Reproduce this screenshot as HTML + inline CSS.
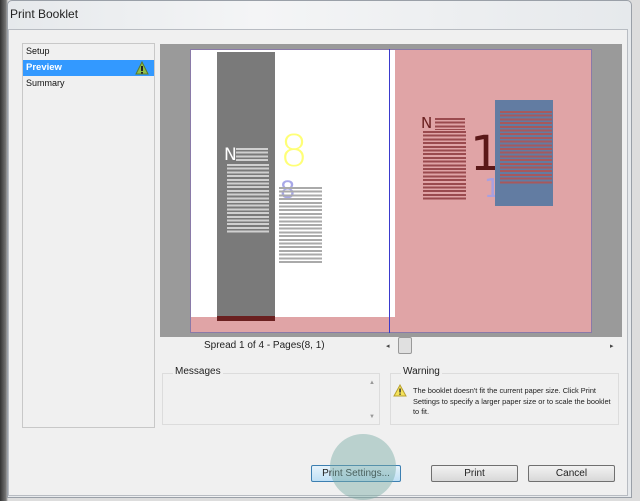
<!DOCTYPE html>
<html><head><style>
*{margin:0;padding:0;box-sizing:border-box}
body{width:640px;height:501px;overflow:hidden;background:#6a6a6a;font-family:"Liberation Sans",sans-serif;position:relative}
.a{position:absolute}
.lines{position:absolute}
</style></head><body>
<div class="a" style="left:0;top:0;width:640px;height:501px;background:linear-gradient(90deg,#333 0,#777 6px,#ddd 8px)"></div>
<div class="a" style="left:7px;top:0;width:625px;height:498px;background:linear-gradient(90deg,#e6e9ec,#f4f5f6 40%,#e6e9ec);border:1px solid #9aa0a8;border-radius:5px 5px 0 0"></div>
<div class="a" style="left:10px;top:7px;font-size:12px;color:#222">Print Booklet</div>
<div class="a" style="left:8px;top:29px;width:620px;height:467px;background:#f0f0f0;border:1px solid #b8bcc2"></div>
<!-- left list -->
<div class="a" style="left:22px;top:43px;width:133px;height:385px;background:#f0f0f0;border:1px solid #c8c8c8"></div>
<div class="a" style="left:26px;top:46px;font-size:9px;color:#111">Setup</div>
<div class="a" style="left:23px;top:60px;width:131px;height:16px;background:#3399ff"></div>
<div class="a" style="left:26px;top:62px;font-size:9.5px;color:#fff;font-weight:bold">Preview</div>
<svg class="a" style="left:135px;top:61px" width="14" height="14"><polygon points="7,1 13,13 1,13" fill="#8fbf4a" stroke="#5a7a2a"/><rect x="6" y="5" width="2" height="5" fill="#222"/><rect x="6" y="11" width="2" height="1.5" fill="#222"/></svg>
<div class="a" style="left:26px;top:78px;font-size:9px;color:#111">Summary</div>
<!-- preview -->
<div class="a" style="left:160px;top:44px;width:462px;height:293px;background:#9a9a9a"></div>
<div class="a" style="left:190px;top:49px;width:205px;height:268px;background:#fff"></div>
<div class="a" style="left:190px;top:317px;width:205px;height:16px;background:#e0a4a6"></div>
<div class="a" style="left:395px;top:49px;width:197px;height:284px;background:#e0a4a6"></div>
<div class="a" style="left:190px;top:49px;width:402px;height:284px;border:1px solid #8a7aa8"></div>
<div class="a" style="left:389px;top:49px;width:1px;height:284px;background:#3a3acc"></div>
<div class="a" style="left:217px;top:52px;width:58px;height:269px;background:#7a7a7a"></div>
<div class="a" style="left:217px;top:316px;width:58px;height:5px;background:#6a2020"></div>
<div class="a" style="left:224px;top:147px;font-size:17px;color:#fff;line-height:17px;font-family:'DejaVu Sans',sans-serif">N</div>
<div class="lines" style="left:236px;top:148px;width:32px;height:13px;background:repeating-linear-gradient(#d0d0d0 0 2px,transparent 2px 3.7px)"></div>
<div class="lines" style="left:227px;top:164px;width:42px;height:70px;background:repeating-linear-gradient(#d0d0d0 0 2px,transparent 2px 3.7px)"></div>
<div class="a" style="left:280px;top:130px;font-size:44px;color:#ffff77;line-height:44px;font-family:'DejaVu Sans',sans-serif;font-weight:200">8</div>
<div class="a" style="left:280px;top:177px;font-size:24px;color:#a8a8e8;line-height:26px;font-family:'DejaVu Sans',sans-serif">8</div>
<div class="lines" style="left:279px;top:187px;width:43px;height:76px;background:repeating-linear-gradient(#aaa 0 2px,transparent 2px 3.7px)"></div>
<div class="a" style="left:421px;top:116px;font-size:15px;color:#6a2020;line-height:15px;font-family:'DejaVu Sans',sans-serif">N</div>
<div class="lines" style="left:435px;top:118px;width:30px;height:12px;background:repeating-linear-gradient(#9a4a4e 0 2px,transparent 2px 3.7px)"></div>
<div class="lines" style="left:423px;top:131px;width:43px;height:70px;background:repeating-linear-gradient(#9a4a4e 0 2px,transparent 2px 3.7px)"></div>
<div class="a" style="left:470px;top:130px;font-size:48px;color:#5a1818;line-height:48px;font-family:'DejaVu Sans',sans-serif">1</div>
<div class="a" style="left:484px;top:176px;font-size:26px;color:#a8a0e0;line-height:26px;font-family:'DejaVu Sans',sans-serif">1</div>
<div class="a" style="left:495px;top:100px;width:58px;height:106px;background:#627ca2"></div>
<div class="lines" style="left:500px;top:111px;width:52px;height:73px;background:repeating-linear-gradient(#a8585c 0 2px,transparent 2px 3.7px)"></div>
<!-- spread bar -->
<div class="a" style="left:204px;top:340px;font-size:10px;color:#222">Spread 1 of 4 - Pages(8, 1)</div>
<div class="a" style="left:386px;top:342px;font-size:7px;color:#444">◂</div>
<div class="a" style="left:398px;top:337px;width:14px;height:17px;background:#e0e0e0;border:1px solid #999;border-radius:2px"></div>
<div class="a" style="left:610px;top:342px;font-size:7px;color:#444">▸</div>
<!-- messages -->
<div class="a" style="left:162px;top:373px;width:218px;height:52px;background:#f0f0f0;border:1px solid #dcdcdc"></div>
<div class="a" style="left:173px;top:366px;font-size:10px;color:#222;background:#f0f0f0;padding:0 2px">Messages</div>
<div class="a" style="left:369px;top:380px;font-size:6px;color:#999">▲</div>
<div class="a" style="left:369px;top:414px;font-size:6px;color:#999">▼</div>
<div class="a" style="left:390px;top:373px;width:229px;height:52px;background:#f0f0f0;border:1px solid #dcdcdc"></div>
<div class="a" style="left:401px;top:366px;font-size:10px;color:#222;background:#f0f0f0;padding:0 2px">Warning</div>
<svg class="a" style="left:393px;top:384px" width="14" height="13"><polygon points="7,1 13,12 1,12" fill="#f5e35a" stroke="#b8a030"/><rect x="6.3" y="4.5" width="1.5" height="4" fill="#333"/><rect x="6.3" y="9.5" width="1.5" height="1.3" fill="#333"/></svg>
<div class="a" style="left:413px;top:386px;width:198px;font-size:7.4px;line-height:10.5px;color:#222">The booklet doesn't fit the current paper size. Click Print Settings to specify a larger paper size or to scale the booklet to fit.</div>
<!-- buttons -->
<div class="a" style="left:311px;top:465px;width:90px;height:17px;background:linear-gradient(#e6f3fb,#bfe0f5);border:1px solid #3c7fb1;border-radius:2px;font-size:10px;text-align:center;line-height:15px;color:#222">Print Settings...</div>
<div class="a" style="left:431px;top:465px;width:87px;height:17px;background:linear-gradient(#f2f2f2,#d8d8d8);border:1px solid #707070;border-radius:2px;font-size:10px;text-align:center;line-height:15px;color:#222">Print</div>
<div class="a" style="left:528px;top:465px;width:87px;height:17px;background:linear-gradient(#f2f2f2,#d8d8d8);border:1px solid #707070;border-radius:2px;font-size:10px;text-align:center;line-height:15px;color:#222">Cancel</div>
<div class="a" style="left:330px;top:434px;width:66px;height:66px;border-radius:50%;background:rgba(120,170,165,0.45)"></div>
</body></html>
